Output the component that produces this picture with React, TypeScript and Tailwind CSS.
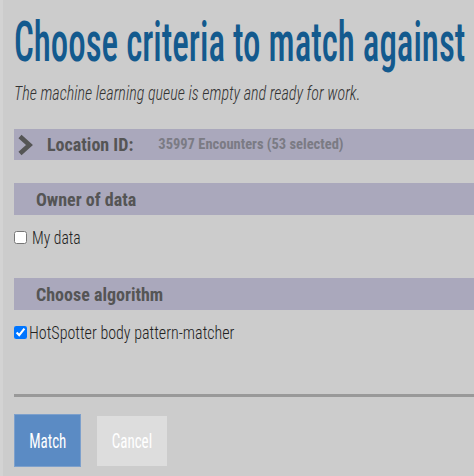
const font = {
  fontFamily: "Roboto, 'Liberation Sans', sans-serif",
};

function SectionBar({ children }: { children: React.ReactNode }) {
  return (
    <div className="flex h-8 items-center bg-[#aaa8bc] pl-[22px] text-[18px] font-bold text-[#555555]">
      {children}
    </div>
  );
}

function Chevron() {
  return (
    <svg width="16" height="22" viewBox="0 0 16 22" className="ml-[3px] shrink-0">
      <path d="M3 2.5 L12.5 11 L3 19.5" fill="none" stroke="#555555" strokeWidth="4.6" strokeLinejoin="miter" />
    </svg>
  );
}

export default function App() {
  return (
    <div
      className="h-[476px] w-[474px] overflow-hidden border-l-[3px] border-[#d3d3d3] bg-[#cccccc] pl-[11px] [font-stretch:75%]"
      style={font}
    >
      <h1 className="pt-[12px] text-[56px] leading-[60px] font-medium whitespace-nowrap text-[#135a8e]">
        <span className="inline-block origin-left scale-x-[0.623]">Choose criteria to match against</span>
      </h1>
      <p className="mt-[9px] text-[20px] leading-6 font-light italic whitespace-nowrap text-[#333333]">
        <span className="inline-block origin-left scale-x-[0.805]">
          The machine learning queue is empty and ready for work.
        </span>
      </p>

      <div className="mt-[24px] flex h-[31px] items-center bg-[#aaa8bc] text-[#555555]">
        <Chevron />
        <span className="ml-[14px] text-[18px] font-bold">Location ID:</span>
        <span className="ml-[25px] text-[14.5px] font-bold text-[#7b7b84]">35997 Encounters (53 selected)</span>
      </div>

      <div className="mt-[23px]">
        <SectionBar>Owner of data</SectionBar>
      </div>
      <label className="mt-[12px] flex h-5 items-center gap-[5px] text-[18px] font-light whitespace-nowrap text-[#222222]">
        <input type="checkbox" className="m-0 h-[13px] w-[13px] shrink-0" />
        <span className="inline-block origin-left scale-x-[0.87]">My data</span>
      </label>

      <div className="mt-[31px]">
        <SectionBar>Choose algorithm</SectionBar>
      </div>
      <label className="mt-[12px] flex h-5 items-center gap-[2px] text-[18px] font-light whitespace-nowrap text-[#222222]">
        <input type="checkbox" defaultChecked className="m-0 h-[13px] w-[13px] shrink-0" />
        <span className="inline-block origin-left scale-x-[0.89]">HotSpotter body pattern-matcher</span>
      </label>

      <div className="mt-[52px] h-[3px] bg-[#999999]" />

      <div className="mt-[17px] flex items-start gap-4">
        <button className="flex h-[53px] w-[67px] items-center justify-center border border-[#7da0cc] bg-[#5b8bc4] text-[20px] text-white">
          <span className="inline-block scale-x-[0.75]">Match</span>
        </button>
        <button className="mt-[2px] flex h-[50px] w-[70px] items-center justify-center bg-[#dddddd] text-[20px] text-white">
          <span className="inline-block scale-x-[0.75]">Cancel</span>
        </button>
      </div>
    </div>
  );
}
